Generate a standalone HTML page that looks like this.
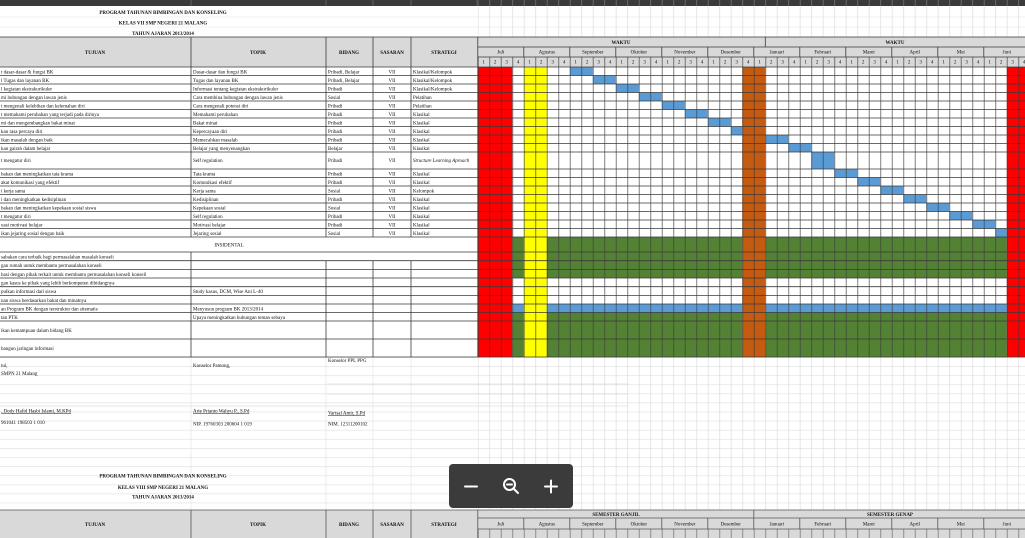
<!DOCTYPE html>
<html><head><meta charset="utf-8"><style>
html,body{margin:0;padding:0;background:#fff;width:1025px;height:538px;overflow:hidden}
svg{display:block}
text{font-family:"Liberation Serif",serif;font-size:5px;fill:#111}
.b{font-weight:bold}
.h{font-weight:bold;font-size:5px}
</style></head><body>
<svg width="1025" height="538" viewBox="0 0 1025 538" xmlns="http://www.w3.org/2000/svg">
<defs>
<pattern id="vd" x="477.8" y="0" width="11.5" height="10" patternUnits="userSpaceOnUse"><rect width="0.8" height="10" fill="#3a3a3a"/></pattern>
<pattern id="vl" x="477.8" y="0" width="11.5" height="10" patternUnits="userSpaceOnUse"><rect width="0.7" height="10" fill="#dcdcdc"/></pattern>
<pattern id="hl" x="0" y="357" width="10" height="9.1" patternUnits="userSpaceOnUse"><rect width="10" height="0.7" fill="#e2e2e2"/></pattern>
</defs>
<!-- top bar -->
<rect x="0" y="0" width="1025" height="6" fill="#3a3a3a"/>
<g stroke="#777" stroke-width="0.6"><path d="M191 0V6M326 0V6M373 0V6M411 0V6M477 0V6"/></g>
<rect x="477.8" y="0" width="548" height="6" fill="url(#vl)" opacity="0.4"/>
<!-- light grid areas -->
<rect x="477.8" y="6" width="548" height="31" fill="url(#vl)"/>
<path d="M0 17H1025M0 27H1025" stroke="#e6e6e6" stroke-width="0.6"/>
<rect x="0" y="357" width="1025" height="153" fill="url(#hl)"/>
<rect x="477.8" y="357" width="548" height="153" fill="url(#vl)"/>
<path d="M191 357V510M326 357V510M373 357V510M411 357V510" stroke="#e2e2e2" stroke-width="0.6"/>
<!-- titles -->
<text class="b" x="163" y="14" text-anchor="middle">PROGRAM TAHUNAN  BIMBINGAN DAN KONSELING</text>
<text class="b" x="163" y="24.5" text-anchor="middle">KELAS VII SMP NEGERI 21 MALANG</text>
<text class="b" x="163" y="35" text-anchor="middle">TAHUN AJARAN 2013/2014</text>
<!-- header -->
<rect x="0" y="37" width="1025" height="30" fill="#d9d9d9"/>
<text class="h" x="95" y="54" text-anchor="middle">TUJUAN</text>
<text class="h" x="258" y="54" text-anchor="middle">TOPIK</text>
<text class="h" x="349" y="54" text-anchor="middle">BIDANG</text>
<text class="h" x="392" y="54" text-anchor="middle">SASARAN</text>
<text class="h" x="444" y="54" text-anchor="middle">STRATEGI</text>
<text class="h" x="621" y="44" text-anchor="middle">WAKTU</text>
<text class="h" x="895" y="44" text-anchor="middle">WAKTU</text>
<g font-size="4.6" text-anchor="middle">
<text x="500.8" y="53.5">Juli</text><text x="546.8" y="53.5">Agustus</text><text x="592.8" y="53.5">September</text><text x="638.8" y="53.5">Oktober</text><text x="684.8" y="53.5">November</text><text x="730.8" y="53.5">Desember</text><text x="776.8" y="53.5">Januari</text><text x="822.8" y="53.5">Februari</text><text x="868.8" y="53.5">Maret</text><text x="914.8" y="53.5">April</text><text x="960.8" y="53.5">Mei</text><text x="1006.8" y="53.5">Juni</text>
<text x="483.6 495.1 506.6 518.1 529.6 541.1 552.6 564.1 575.6 587.1 598.6 610.1 621.6 633.1 644.6 656.1 667.6 679.1 690.6 702.1 713.6 725.1 736.6 748.1 759.6 771.1 782.6 794.1 805.6 817.1 828.6 840.1 851.6 863.1 874.6 886.1 897.6 909.1 920.6 932.1 943.6 955.1 966.6 978.1 989.6 1001.1 1012.6 1024.1" y="63.5">123412341234123412341234123412341234123412341234</text>
</g>
<!-- gantt fills -->
<g>
<rect x="477.8" y="67" width="34.5" height="290" fill="#ff0000"/>
<rect x="1006.8" y="67" width="20" height="290" fill="#ff0000"/>
<rect x="523.8" y="67" width="23" height="290" fill="#ffff00"/>
<rect x="742.3" y="67" width="23" height="290" fill="#c55a11"/>
<g fill="#548235">
<rect x="512.3" y="237" width="11.5" height="41"/><rect x="546.8" y="237" width="195.5" height="41"/><rect x="765.3" y="237" width="241.5" height="41"/>
<rect x="512.3" y="312.5" width="11.5" height="44.5"/><rect x="546.8" y="312.5" width="195.5" height="44.5"/><rect x="765.3" y="312.5" width="241.5" height="44.5"/>
</g>
<g fill="#5b9bd5">
<rect x="512.3" y="304" width="11.5" height="8.5"/><rect x="546.8" y="304" width="195.5" height="8.5"/><rect x="765.3" y="304" width="241.5" height="8.5"/>
<rect x="569.8" y="67" width="23" height="8.5"/>
<rect x="592.8" y="75.5" width="23" height="8.5"/>
<rect x="615.8" y="84" width="23" height="8.5"/>
<rect x="638.8" y="92.5" width="23" height="8.5"/>
<rect x="661.8" y="101" width="23" height="8.5"/>
<rect x="684.8" y="109.5" width="23" height="8.5"/>
<rect x="707.8" y="118" width="23" height="8.5"/>
<rect x="730.8" y="126.5" width="11.5" height="8.5"/>
<rect x="765.3" y="135" width="23" height="8.5"/>
<rect x="788.3" y="143.5" width="23" height="8.5"/>
<rect x="811.3" y="152" width="23" height="17"/>
<rect x="834.3" y="169" width="23" height="8.5"/>
<rect x="857.3" y="177.5" width="23" height="8.5"/>
<rect x="880.3" y="186" width="23" height="8.5"/>
<rect x="903.3" y="194.5" width="23" height="8.5"/>
<rect x="926.3" y="203" width="23" height="8.5"/>
<rect x="949.3" y="211.5" width="23" height="8.5"/>
<rect x="972.3" y="220" width="23" height="8.5"/>
<rect x="995.3" y="228.5" width="11.5" height="8.5"/>
</g>
</g>
<!-- gantt grid -->
<rect x="477.8" y="57" width="548" height="300" fill="url(#vd)" opacity="0.8"/>
<g stroke="#3a3a3a" stroke-width="0.8" fill="none">
<path d="M523.8 47V57M569.8 47V57M615.8 47V57M661.8 47V57M707.8 47V57M753.8 47V57M799.8 47V57M845.8 47V57M891.8 47V57M937.8 47V57M983.8 47V57M765.3 37V47"/>
<path d="M477.8 37V357M0 37H1025M477.8 47H1025M477.8 57H1025M0 67H1025"/>
<path d="M0 75.5H1025M0 84H1025M0 92.5H1025M0 101H1025M0 109.5H1025M0 118H1025M0 126.5H1025M0 135H1025M0 143.5H1025M0 152H1025M0 169H1025M0 177.5H1025M0 186H1025M0 194.5H1025M0 203H1025M0 211.5H1025M0 220H1025M0 228.5H1025M0 237H1025M0 252H1025M0 260.7H1025M0 269.4H1025M0 278H1025M0 286.7H1025M0 295.4H1025M0 304H1025M0 312.5H1025M0 321H1025M0 339H1025M0 357H1025"/>
<path d="M191 37V237M326 37V237M373 37V237M411 37V237M191 252V357M326 260.7V357M373 260.7V357M411 260.7V357"/>
</g>
<!-- table body text -->
<g>
<text x="1" y="73.5">t  dasar-dasar &amp; fungsi BK</text><text x="193" y="73.5">Dasar-dasar dan fungsi BK</text><text x="328" y="73.5">Pribadi, Belajar</text><text x="392" y="73.5" text-anchor="middle">VII</text><text x="413" y="73.5">Klasikal/Kelompok</text>
<text x="1" y="82">l Tugas dan layanan BK</text><text x="193" y="82">Tugas dan layanan BK</text><text x="328" y="82">Pribadi, Belajar</text><text x="392" y="82" text-anchor="middle">VII</text><text x="413" y="82">Klasikal/Kelompok</text>
<text x="1" y="90.5">l kegiatan ekstrakurikuler</text><text x="193" y="90.5">Informasi tentang kegiatan ekstrakurikuler</text><text x="328" y="90.5">Pribadi</text><text x="392" y="90.5" text-anchor="middle">VII</text><text x="413" y="90.5">Klasikal/Kelompok</text>
<text x="1" y="99">mi  hubungan dengan  lawan jenis</text><text x="193" y="99">Cara membina hubungan dengan lawan jenis</text><text x="328" y="99">Sosial</text><text x="392" y="99" text-anchor="middle">VII</text><text x="413" y="99">Pelatihan</text>
<text x="1" y="107.5">t mengenali kelebihan dan kelemahan diri</text><text x="193" y="107.5">Cara mengenali potensi diri</text><text x="328" y="107.5">Pribadi</text><text x="392" y="107.5" text-anchor="middle">VII</text><text x="413" y="107.5">Pelatihan</text>
<text x="1" y="116">t memahami perubahan yang terjadi pada dirinya</text><text x="193" y="116">Memahami perubahan</text><text x="328" y="116">Pribadi</text><text x="392" y="116" text-anchor="middle">VII</text><text x="413" y="116">Klasikal</text>
<text x="1" y="124.5">mi dan mengembangkan bakat minat</text><text x="193" y="124.5">Bakat minat</text><text x="328" y="124.5">Pribadi</text><text x="392" y="124.5" text-anchor="middle">VII</text><text x="413" y="124.5">Klasikal</text>
<text x="1" y="133">kan rasa percaya diri</text><text x="193" y="133">Kepercayaan diri</text><text x="328" y="133">Pribadi</text><text x="392" y="133" text-anchor="middle">VII</text><text x="413" y="133">Klasikal</text>
<text x="1" y="141.5">ikan masalah dengan baik</text><text x="193" y="141.5">Memecahkan masalah</text><text x="328" y="141.5">Pribadi</text><text x="392" y="141.5" text-anchor="middle">VII</text><text x="413" y="141.5">Klasikal</text>
<text x="1" y="150">kan gairah dalam belajar</text><text x="193" y="150">Belajar yang menyenangkan</text><text x="328" y="150">Belajar</text><text x="392" y="150" text-anchor="middle">VII</text><text x="413" y="150">Klasikal</text>
<text x="1" y="162">t mengatur diri</text><text x="193" y="162">Self regulation</text><text x="328" y="162">Pribadi</text><text x="392" y="162" text-anchor="middle">VII</text><text x="413" y="162" font-style="italic">Structure Learning Aproach</text>
<text x="1" y="175.5">bakan dan meningkatkan tata krama</text><text x="193" y="175.5">Tata krama</text><text x="328" y="175.5">Pribadi</text><text x="392" y="175.5" text-anchor="middle">VII</text><text x="413" y="175.5">Klasikal</text>
<text x="1" y="184">akat komunikasi yang efektif</text><text x="193" y="184">Komunikasi efektif</text><text x="328" y="184">Pribadi</text><text x="392" y="184" text-anchor="middle">VII</text><text x="413" y="184">Klasikal</text>
<text x="1" y="192.5">i kerja sama</text><text x="193" y="192.5">Kerja sama</text><text x="328" y="192.5">Sosial</text><text x="392" y="192.5" text-anchor="middle">VII</text><text x="413" y="192.5">Kelompok</text>
<text x="1" y="201">i dan meningkatkan kedisiplinan</text><text x="193" y="201">Kedisiplinan</text><text x="328" y="201">Pribadi</text><text x="392" y="201" text-anchor="middle">VII</text><text x="413" y="201">Klasikal</text>
<text x="1" y="209.5">bakan dan meningkatkan kepekaan sosial siswa</text><text x="193" y="209.5">Kepekaan sosial</text><text x="328" y="209.5">Sosial</text><text x="392" y="209.5" text-anchor="middle">VII</text><text x="413" y="209.5">Klasikal</text>
<text x="1" y="218">t mengatur diri</text><text x="193" y="218">Self regulation</text><text x="328" y="218">Pribadi</text><text x="392" y="218" text-anchor="middle">VII</text><text x="413" y="218">Klasikal</text>
<text x="1" y="226.5">uasi motivasi belajar</text><text x="193" y="226.5">Motivasi belajar</text><text x="328" y="226.5">Pribadi</text><text x="392" y="226.5" text-anchor="middle">VII</text><text x="413" y="226.5">Klasikal</text>
<text x="1" y="235">ikan jejaring sosial dengan baik</text><text x="193" y="235">Jejaring sosial</text><text x="328" y="235">Sosial</text><text x="392" y="235" text-anchor="middle">VII</text><text x="413" y="235">Klasikal</text>
<text x="229" y="246.5" text-anchor="middle">INSIDENTAL</text>
<text x="1" y="258.5">sabakan cara terbaik bagi permasalahan masalah konseli</text>
<text x="1" y="267">gan rumah untuk membantu permasalahan konseli</text>
<text x="1" y="275.8">basi dengan pihak terkait untuk membantu permasalahan konseli konseli</text>
<text x="1" y="284.5">gan kasus ke pihak yang lebih berkompeten dibidangnya</text>
<text x="1" y="293">pulkan informasi dari siswa</text><text x="193" y="293">Study kasus, DCM, Wise Ani L-40</text>
<text x="1" y="301.8">nan siswa berdasarkan bakat dan minatnya</text>
<text x="1" y="310.3">an Program BK dengan terstruktur dan sitematis</text><text x="193" y="310.3">Menyusun program BK 2013/2014</text>
<text x="1" y="318.8">tan PTK</text><text x="193" y="318.8">Upaya meningkatkan hubungan teman sebaya</text>
<text x="1" y="332">ikan kemampuan dalam bidang BK</text>
<text x="1" y="350">bangun jaringan informasi</text>
</g>
<!-- signatures -->
<text x="1" y="367">tui,</text>
<text x="1" y="375">SMPN 21 Malang</text>
<text x="193" y="367">Konselor Pamong,</text>
<text x="328" y="362">Konselor PPL PPG</text>
<text x="1" y="412.5" text-decoration="underline">. Dody Hafid Hasbi Islami, M.KPd</text>
<text x="193" y="412.5" text-decoration="underline">Arie Prianto Wahyu P., S.Pd</text>
<text x="328" y="414.5" text-decoration="underline">Varisal Amir, S.Pd</text>
<text x="1" y="424">961041 198503 1 010</text>
<text x="193" y="425.5">NIP. 19760303 200604 1 019</text>
<text x="328" y="425.5">NIM. 12311200102</text>
<path d="M327 384H628M327 394H628M0 406H628" stroke="#cfcfcf" stroke-width="0.6"/>
<!-- lower title -->
<text class="b" x="163" y="477.5" text-anchor="middle">PROGRAM TAHUNAN  BIMBINGAN DAN KONSELING</text>
<text class="b" x="163" y="489" text-anchor="middle">KELAS VIII SMP NEGERI 21 MALANG</text>
<text class="b" x="163" y="498.5" text-anchor="middle">TAHUN AJARAN 2013/2014</text>
<!-- lower header -->
<rect x="0" y="510" width="1025" height="28" fill="#d9d9d9"/>
<g stroke="#555" stroke-width="0.8" fill="none">
<path d="M0 510H1025M477.8 518H1025M477.8 529H1025M191 510V538M326 510V538M373 510V538M411 510V538M477.8 510V538M753.8 510V529M523.8 518V529M569.8 518V529M615.8 518V529M661.8 518V529M707.8 518V529M799.8 518V529M845.8 518V529M891.8 518V529M937.8 518V529M983.8 518V529"/>
</g>
<rect x="477.8" y="529" width="548" height="9" fill="url(#vd)" opacity="0.6"/>
<text class="h" x="95" y="526" text-anchor="middle">TUJUAN</text>
<text class="h" x="258" y="526" text-anchor="middle">TOPIK</text>
<text class="h" x="349" y="526" text-anchor="middle">BIDANG</text>
<text class="h" x="392" y="526" text-anchor="middle">SASARAN</text>
<text class="h" x="444" y="526" text-anchor="middle">STRATEGI</text>
<text class="h" x="616" y="516" text-anchor="middle">SEMESTER GANJIL</text>
<text class="h" x="890" y="516" text-anchor="middle">SEMESTER GENAP</text>
<g font-size="4.6" text-anchor="middle">
<text x="500.8" y="525.5">Juli</text><text x="546.8" y="525.5">Agustus</text><text x="592.8" y="525.5">September</text><text x="638.8" y="525.5">Oktober</text><text x="684.8" y="525.5">November</text><text x="730.8" y="525.5">Desember</text><text x="776.8" y="525.5">Januari</text><text x="822.8" y="525.5">Februari</text><text x="868.8" y="525.5">Maret</text><text x="914.8" y="525.5">April</text><text x="960.8" y="525.5">Mei</text><text x="1006.8" y="525.5">Juni</text>
</g>
<!-- zoom overlay -->
<rect x="449" y="464" width="124" height="44" rx="4" fill="#3b3b3b"/>
<g stroke="#fff" stroke-width="2" fill="none" stroke-linecap="round">
<path d="M465 486.5H477"/>
<circle cx="509.5" cy="484.5" r="5.5"/>
<path d="M513.5 488.5L518 493"/>
<path d="M507 484.5H512"/>
<path d="M545 486.5H557M551 480.5V492.5"/>
</g>
</svg>
</body></html>
